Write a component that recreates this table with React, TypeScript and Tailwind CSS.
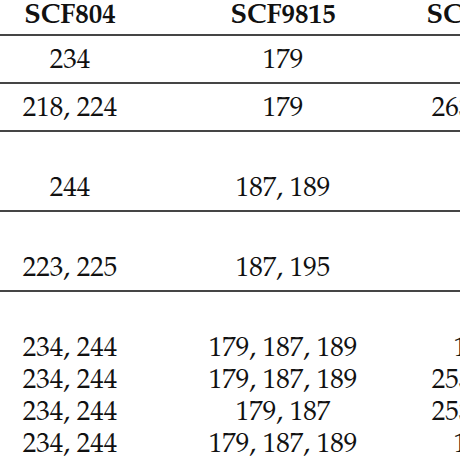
import React from "react";

type Row = { cells: [string, string, string]; blank?: boolean };

const rows: Row[] = [
  { cells: ["234", "179", ""] },
  { cells: ["218, 224", "179", "263, 267"] },
  { cells: ["244", "187, 189", ""], blank: true },
  { cells: ["223, 225", "187, 195", ""], blank: true },
];

const group: [string, string, string][] = [
  ["234, 244", "179, 187, 189", "179*"],
  ["234, 244", "179, 187, 189", "255, 259"],
  ["234, 244", "179, 187", "253, 257"],
  ["234, 244", "179, 187, 189", "179*"],
];

const font = {
  fontFamily: '"P052", "TeX Gyre Pagella", "Palatino Linotype", "Liberation Serif", serif',
};

function Cells({ cells, bold }: { cells: [string, string, string]; bold?: boolean }) {
  return (
    <div className={`grid grid-cols-[140px_286px_106px] ${bold ? "font-bold" : ""}`}>
      {cells.map((c, i) => (
        <div key={i} className="text-center whitespace-nowrap h-[32px] leading-[32px]">
          {c}
        </div>
      ))}
    </div>
  );
}

export default function App() {
  return (
    <div className="w-[460px] h-[460px] overflow-hidden bg-white text-[#111]" style={font}>
      <div className="w-[532px] -mt-[12px] text-[27px]">
        <div className="pt-[13px] pb-[1px] border-b-2 border-[#454545]">
          <Cells cells={["SCF804", "SCF9815", "SCF9828"]} bold />
        </div>
        {rows.map((r, i) => (
          <div key={i} className="pt-[10px] pb-[4px] border-b-2 border-[#454545]">
            {r.blank && <div className="h-[32px]" />}
            <Cells cells={r.cells} />
          </div>
        ))}
        <div className="pt-[10px] pb-[4px]">
          <div className="h-[32px]" />
          {group.map((g, i) => (
            <Cells key={i} cells={g} />
          ))}
        </div>
      </div>
    </div>
  );
}
